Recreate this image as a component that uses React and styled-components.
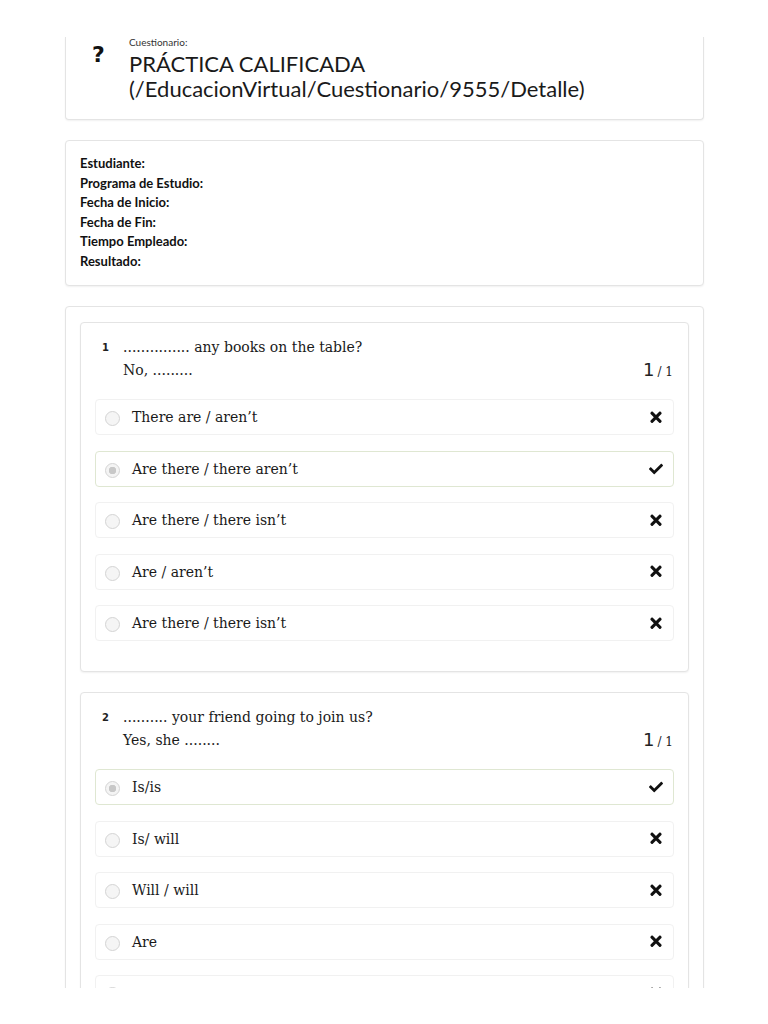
import React from "react";
import styled, { createGlobalStyle } from "styled-components";
import { FaCheck, FaTimes } from "react-icons/fa";

const GlobalStyle = createGlobalStyle`
  html, body {
    margin: 0;
    padding: 0;
    background: #fff;
  }
  body {
    font-family: "Lato", "Open Sans", sans-serif;
    color: #222;
  }
`;

const questions = [
  {
    n: 1,
    lines: ["............... any books on the table?", "No, ........."],
    options: [
      { text: "There are / aren’t" },
      { text: "Are there / there aren’t", chosen: true },
      { text: "Are there / there isn’t" },
      { text: "Are / aren’t" },
      { text: "Are there / there isn’t" },
    ],
  },
  {
    n: 2,
    lines: [".......... your friend going to join us?", "Yes, she ........"],
    options: [
      { text: "Is/is", chosen: true },
      { text: "Is/ will" },
      { text: "Will / will" },
      { text: "Are" },
      { text: "" },
    ],
  },
];

const info = [
  "Estudiante:",
  "Programa de Estudio:",
  "Fecha de Inicio:",
  "Fecha de Fin:",
  "Tiempo Empleado:",
  "Resultado:",
];

function App() {
  return (
    <>
      <GlobalStyle />
      <Frame>
        <Page>
          <HeaderCard>
            <QuestionMark>?</QuestionMark>
            <HeaderText>
              <Caption>Cuestionario:</Caption>
              <Title>
                PRÁCTICA CALIFICADA
                <br />
                (/EducacionVirtual/Cuestionario/9555/Detalle)
              </Title>
            </HeaderText>
          </HeaderCard>

          <InfoCard>
            {info.map((label) => (
              <InfoRow key={label}>{label}</InfoRow>
            ))}
          </InfoCard>

          <Card>
            {questions.map((q) => (
              <QuestionCard key={q.n}>
                <QuestionHead>
                  <Number>{q.n}</Number>
                  <Prompt>
                    <PromptLine>{q.lines[0]}</PromptLine>
                    <PromptLine>{q.lines[1]}</PromptLine>
                  </Prompt>
                  <Score>
                    <b>1</b>
                    <span>/ 1</span>
                  </Score>
                </QuestionHead>
                <Options>
                  {q.options.map((o, i) => (
                    <Option key={i} $chosen={o.chosen}>
                      <Radio $chosen={o.chosen} />
                      <OptionText>{o.text}</OptionText>
                      {o.chosen ? (
                        <Mark $size={14}>
                          <FaCheck />
                        </Mark>
                      ) : (
                        <Mark $size={16.5}>
                          <FaTimes />
                        </Mark>
                      )}
                    </Option>
                  ))}
                </Options>
              </QuestionCard>
            ))}
          </Card>
        </Page>
      </Frame>
    </>
  );
}

const Frame = styled.div`
  margin-top: 37px;
  height: 951px;
  overflow: hidden;
`;

const Page = styled.div`
  padding: 0 64px 0 65px;
  display: flex;
  flex-direction: column;
  gap: 20px;
`;

const BaseCard = styled.div`
  background: #fff;
  border: 1px solid #e4e4e4;
  border-radius: 4px;
  box-shadow: 0 1px 2px rgba(0, 0, 0, 0.06);
`;

const HeaderCard = styled(BaseCard)`
  border-top: none;
  border-radius: 0 0 4px 4px;
  display: flex;
  align-items: flex-start;
  gap: 23px;
  padding: 0 20px 18px 26px;
`;

const QuestionMark = styled.div`
  font-family: "DejaVu Sans", sans-serif;
  font-weight: 700;
  font-size: 22px;
  line-height: 22px;
  margin-top: 7px;
  width: 14px;
  color: #111;
`;

const HeaderText = styled.div`
  display: flex;
  flex-direction: column;
`;

const Caption = styled.div`
  font-size: 10px;
  line-height: 12px;
  color: #333;
  margin-top: -1px;
  margin-bottom: 3px;
`;

const Title = styled.div`
  font-size: 22px;
  line-height: 25px;
  color: #1a1a1a;
`;

const InfoCard = styled(BaseCard)`
  padding: 13px 14px 14px;
  display: flex;
  flex-direction: column;
`;

const InfoRow = styled.div`
  font-size: 13px;
  font-weight: 700;
  line-height: 19.5px;
  color: #111;
`;

const Card = styled(BaseCard)`
  padding: 15px 14px;
  display: flex;
  flex-direction: column;
  gap: 20px;
`;

const QuestionCard = styled(BaseCard)`
  padding: 13px 14px 30px;
`;

const QuestionHead = styled.div`
  display: flex;
  align-items: flex-start;
  padding-left: 7px;
`;

const Number = styled.div`
  font-family: "DejaVu Sans", sans-serif;
  font-weight: 700;
  font-size: 10px;
  line-height: 23px;
  width: 21px;
`;

const Prompt = styled.div`
  flex: 1;
  display: flex;
  flex-direction: column;
`;

const PromptLine = styled.div`
  font-family: "DejaVu Serif", serif;
  font-size: 14px;
  line-height: 23px;
  color: #1a1a1a;
`;

const Score = styled.div`
  align-self: flex-end;
  font-family: "DejaVu Serif", serif;
  color: #222;
  display: flex;
  align-items: baseline;
  gap: 3px;
  margin-right: 1px;
  margin-bottom: 2px;
  b {
    font-family: "DejaVu Sans", sans-serif;
    font-weight: 400;
    font-size: 18px;
  }
  span {
    font-size: 12px;
  }
`;

const Options = styled.div`
  margin-top: 17px;
  display: flex;
  flex-direction: column;
  gap: 15.5px;
`;

const Option = styled.div`
  height: 36px;
  box-sizing: border-box;
  border: 1px solid ${(p) => (p.$chosen ? "#dfe7d2" : "#f1f1f1")};
  border-radius: 4px;
  display: flex;
  align-items: center;
  padding: 0 10px 0 9px;
`;

const Radio = styled.span`
  width: 13px;
  height: 13px;
  border-radius: 50%;
  border: 1px solid #d4d4d4;
  background: ${(p) =>
    p.$chosen
      ? "radial-gradient(circle, #c8c8c8 0 3.5px, #f4f4f4 4px)"
      : "#f5f5f5"};
  margin-top: 3px;
  flex-shrink: 0;
`;

const OptionText = styled.span`
  flex: 1;
  margin-left: 12px;
  font-family: "DejaVu Serif", serif;
  font-size: 14px;
  color: #1a1a1a;
`;

const Mark = styled.span`
  display: flex;
  width: 14px;
  justify-content: center;
  font-size: ${(p) => p.$size}px;
  color: #111;
`;

export default App;
